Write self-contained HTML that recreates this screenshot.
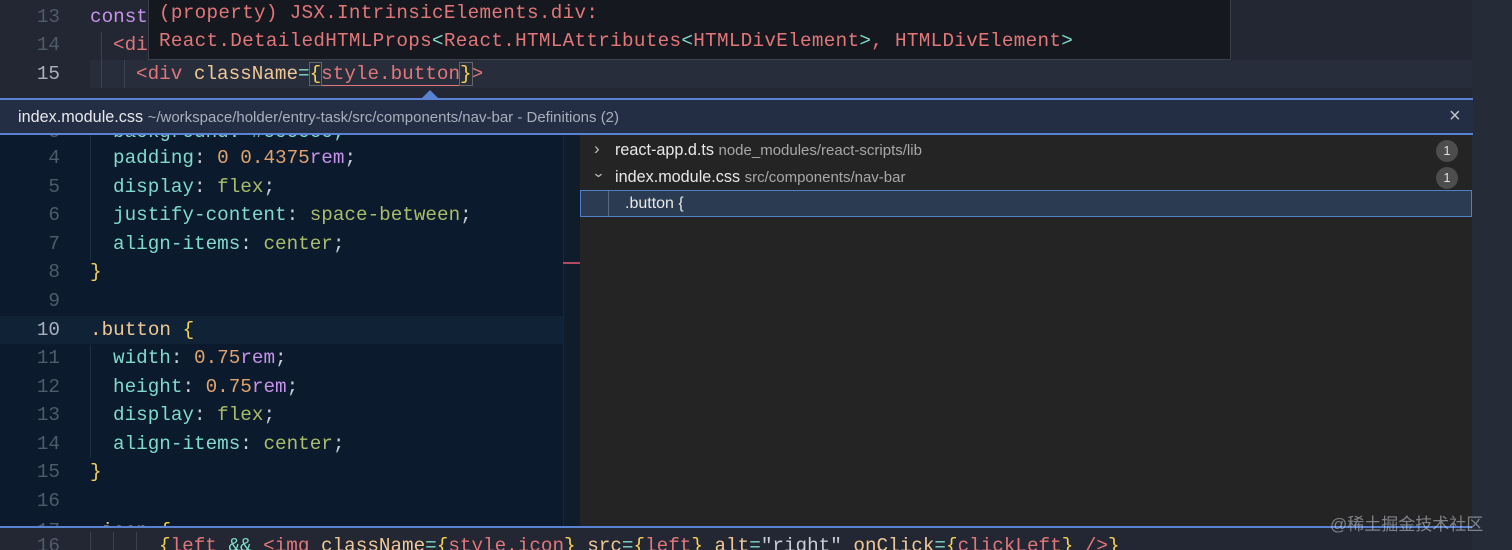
<!DOCTYPE html>
<html><head><meta charset="utf-8"><style>
*{margin:0;padding:0;box-sizing:border-box}
html,body{width:1512px;height:550px;overflow:hidden}
body{background:#222733;position:relative;font-family:"Liberation Mono",monospace;font-size:19.3px}
.l{position:absolute;height:28px;line-height:28px;white-space:pre}
.n{position:absolute;width:60px;text-align:right;height:28px;line-height:28px;color:#4f5b6b}
.p{color:#7fdbca}.v{color:#e1a26e}.u{color:#c792ea}.g{color:#a9bd6a}.y{color:#f7d154}.s{color:#f0c895}.w{color:#c8ccd4}.r{color:#e2777a}.c{color:#7fdbca}
.sans{font-family:"Liberation Sans",sans-serif}
</style></head><body>
<div style="position:absolute;left:90px;top:60px;width:1382px;height:28px;background:#272d3b"></div>
<div style="position:absolute;left:1472px;top:0;width:40px;height:550px;background:#252b37"></div>
<div class="n" style="left:0;top:3px">13</div>
<div class="n" style="left:0;top:31px">14</div>
<div class="n" style="left:0;top:60px;color:#a8b0bd">15</div>
<div class="l" style="left:90px;top:3px"><span class="u">const</span></div>
<div class="l" style="left:113px;top:31px"><span class="r">&lt;di</span></div>
<div style="position:absolute;left:101px;top:32px;width:1px;height:56px;background:#3a4150"></div>
<div style="position:absolute;left:124px;top:60px;width:1px;height:28px;background:#3a4150"></div>
<div class="l" style="left:136px;top:60px"><span class="r">&lt;div</span> <span class="s">className</span><span class="c">=</span><span class="y" style="outline:1px solid #666;">{</span><span class="r" style="border-bottom:1px solid #e2777a">style.button</span><span class="y" style="outline:1px solid #666">}</span><span class="r">&gt;</span></div>
<div style="position:absolute;left:148px;top:-1px;width:1083px;height:61px;background:#15181e;border:1px solid #3a3f4a"></div>
<div class="l" style="left:159px;top:-1px;letter-spacing:0.3px"><span class="r">(property) JSX.IntrinsicElements.div:</span></div>
<div class="l" style="left:159px;top:27px;letter-spacing:0.3px"><span class="r">React.DetailedHTMLProps</span><span class="c">&lt;</span><span class="r">React.HTMLAttributes</span><span class="c">&lt;</span><span class="r">HTMLDivElement</span><span class="c">&gt;</span><span class="r">, HTMLDivElement</span><span class="c">&gt;</span></div>
<div style="position:absolute;left:0;top:98px;width:1473px;height:37px;background:#232d44;border-top:2px solid #5a82d2;border-bottom:2px solid #5a82d2"></div>
<div style="position:absolute;left:421px;top:90px;width:0;height:0;border-left:9px solid transparent;border-right:9px solid transparent;border-bottom:9px solid #5a82d2"></div>
<div class="sans" style="position:absolute;left:18px;top:108px;font-size:16.2px;color:#e6e8ec;white-space:pre">index.module.css <span style="font-size:15px;color:#a9b0bc">~/workspace/holder/entry-task/src/components/nav-bar - Definitions (2)</span></div>
<div class="sans" style="position:absolute;left:1449px;top:105px;font-size:20px;color:#c0c4cc">×</div>
<div style="position:absolute;left:0;top:135px;width:580px;height:391px;background:#0b1a2d;overflow:hidden">
 <div style="position:absolute;left:0;top:181px;width:563px;height:28px;background:#102236"></div>
 <div style="position:absolute;left:563px;top:0;width:17px;height:392px;background:#0e1c2c;border-left:1px solid #17263a"></div>
 <div style="position:absolute;left:563px;top:127px;width:17px;height:2px;background:#b04a60"></div>
 <div style="position:absolute;left:90px;top:0;width:1px;height:125px;background:#1e2d40"></div>
 <div style="position:absolute;left:90px;top:210px;width:1px;height:113px;background:#1e2d40"></div>
 <div class="n" style="left:0;top:-17px">3</div><div class="l" style="left:113px;top:-17px"><span class="p">background: #ececec;</span></div>
 <div class="n" style="left:0;top:9px">4</div><div class="l" style="left:113px;top:9px"><span class="p">padding</span><span class="w">: </span><span class="v">0 0.4375</span><span class="u">rem</span><span class="w">;</span></div>
 <div class="n" style="left:0;top:38px">5</div><div class="l" style="left:113px;top:38px"><span class="p">display</span><span class="w">: </span><span class="g">flex</span><span class="w">;</span></div>
 <div class="n" style="left:0;top:66px">6</div><div class="l" style="left:113px;top:66px"><span class="p">justify-content</span><span class="w">: </span><span class="g">space-between</span><span class="w">;</span></div>
 <div class="n" style="left:0;top:95px">7</div><div class="l" style="left:113px;top:95px"><span class="p">align-items</span><span class="w">: </span><span class="g">center</span><span class="w">;</span></div>
 <div class="n" style="left:0;top:123px">8</div><div class="l" style="left:90px;top:123px"><span class="y">}</span></div>
 <div class="n" style="left:0;top:152px">9</div>
 <div class="n" style="left:0;top:181px;color:#a8b0bd">10</div><div class="l" style="left:90px;top:181px"><span class="s">.button </span><span class="y">{</span></div>
 <div class="n" style="left:0;top:209px">11</div><div class="l" style="left:113px;top:209px"><span class="p">width</span><span class="w">: </span><span class="v">0.75</span><span class="u">rem</span><span class="w">;</span></div>
 <div class="n" style="left:0;top:238px">12</div><div class="l" style="left:113px;top:238px"><span class="p">height</span><span class="w">: </span><span class="v">0.75</span><span class="u">rem</span><span class="w">;</span></div>
 <div class="n" style="left:0;top:266px">13</div><div class="l" style="left:113px;top:266px"><span class="p">display</span><span class="w">: </span><span class="g">flex</span><span class="w">;</span></div>
 <div class="n" style="left:0;top:295px">14</div><div class="l" style="left:113px;top:295px"><span class="p">align-items</span><span class="w">: </span><span class="g">center</span><span class="w">;</span></div>
 <div class="n" style="left:0;top:323px">15</div><div class="l" style="left:90px;top:323px"><span class="y">}</span></div>
 <div class="n" style="left:0;top:352px">16</div>
 <div class="n" style="left:0;top:382px">17</div><div class="l" style="left:90px;top:382px"><span class="s">.icon </span><span class="y">{</span></div>
</div>
<div class="sans" style="position:absolute;left:580px;top:135px;width:892px;height:391px;background:#242424">
 <div style="position:absolute;left:14px;top:4px;color:#c0c0c0;font-size:17px">›</div>
 <div style="position:absolute;left:35px;top:6px;font-size:16.2px;color:#e8e8e8;white-space:pre">react-app.d.ts <span style="font-size:15px;color:#a8a8a8">node_modules/react-scripts/lib</span></div>
 <div style="position:absolute;left:856px;top:5px;width:22px;height:22px;border-radius:11px;background:#4d4d4d;color:#e0e0e0;font-size:13px;text-align:center;line-height:22px">1</div>
 <div style="position:absolute;left:13px;top:30px;color:#c0c0c0;font-size:13px;transform:scaleX(1.3)">⌄</div>
 <div style="position:absolute;left:35px;top:33px;font-size:16.2px;color:#e8e8e8;white-space:pre">index.module.css <span style="font-size:15px;color:#a8a8a8">src/components/nav-bar</span></div>
 <div style="position:absolute;left:856px;top:32px;width:22px;height:22px;border-radius:11px;background:#4d4d4d;color:#e0e0e0;font-size:13px;text-align:center;line-height:22px">1</div>
 <div style="position:absolute;left:0;top:55px;width:892px;height:27px;background:#2b3b52;border:1px solid #4f7fc7"></div>
 <div style="position:absolute;left:28px;top:56px;width:1px;height:25px;background:#5a6a80"></div>
 <div style="position:absolute;left:45px;top:60px;font-size:16px;color:#e8e8e8">.button {</div>
</div>
<div style="position:absolute;left:0;top:526px;width:1472px;height:2px;background:#5a82d2"></div>
<div class="n" style="left:0;top:532px">16</div>
<div style="position:absolute;left:90px;top:532px;width:1px;height:20px;background:#3a4150"></div>
<div style="position:absolute;left:113px;top:532px;width:1px;height:20px;background:#3a4150"></div>
<div style="position:absolute;left:136px;top:532px;width:1px;height:20px;background:#3a4150"></div>
<div class="l" style="left:159px;top:532px"><span class="y">{</span><span class="r">left </span><span class="c">&amp;&amp;</span><span class="r"> &lt;img </span><span class="s">className</span><span class="c">=</span><span class="y">{</span><span class="r">style.icon</span><span class="y">}</span> <span class="s">src</span><span class="c">=</span><span class="y">{</span><span class="r">left</span><span class="y">}</span> <span class="s">alt</span><span class="c">=</span><span class="w">"right"</span> <span class="s">onClick</span><span class="c">=</span><span class="y">{</span><span class="r">clickLeft</span><span class="y">}</span><span class="r"> /&gt;</span><span class="y">}</span></div>
<div style="position:absolute;left:1330px;top:510px;font-family:'Liberation Sans','Noto Sans CJK SC',sans-serif;font-size:17px;color:rgba(200,205,215,0.55)">@稀土掘金技术社区</div>
</body></html>
